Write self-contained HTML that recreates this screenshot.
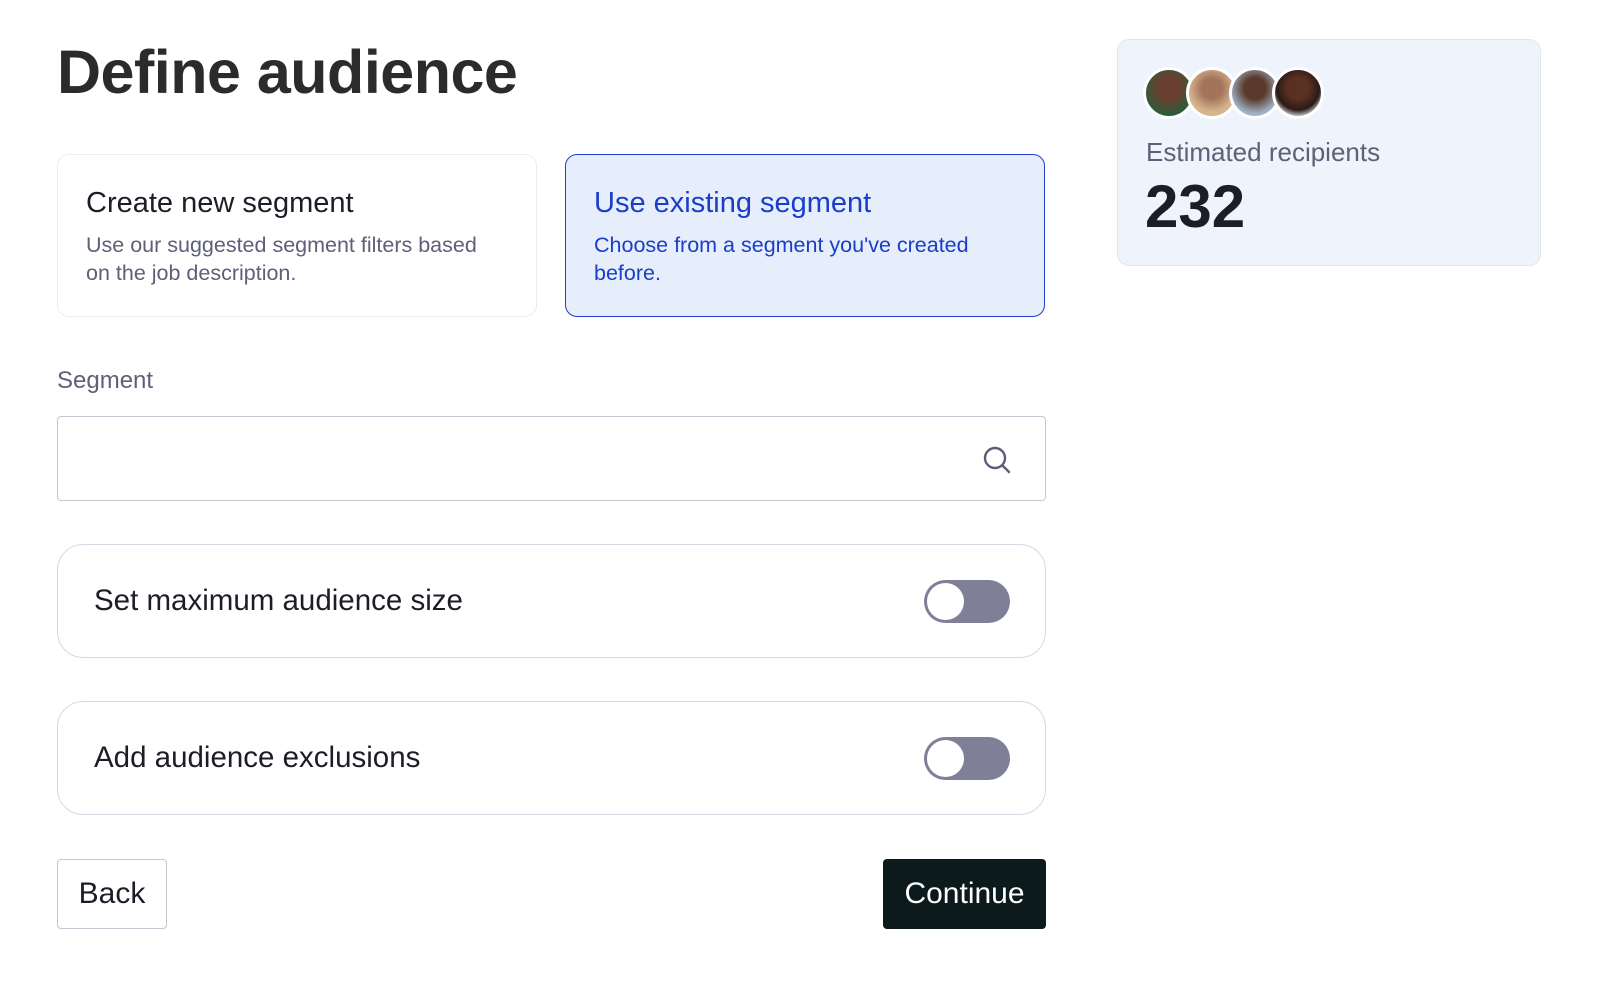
<!DOCTYPE html>
<html><head><meta charset="utf-8"><style>
*{box-sizing:border-box;margin:0;padding:0}
body{width:1598px;height:1008px;background:#fff;font-family:"Liberation Sans",sans-serif;position:relative;overflow:hidden;color:#1d1d28}
.abs{position:absolute}
h1{position:absolute;left:57px;top:37px;font-size:61px;font-weight:bold;color:#2b2b2b;letter-spacing:-0.5px}
.card{position:absolute;top:154px;width:480px;height:163px;border:1px solid #ebebf0;border-radius:12px;padding:32px 28px}
.card .t{font-size:29px}
.card .d{font-size:21.5px;line-height:28px;margin-top:11px;color:#5e5f78;max-width:410px}
.sel{background:#e6edfb;border-color:#1f3fcf;color:#1a3ec9}
.sel .d{color:#1a3ec9}
.lbl{left:57px;top:367px;font-size:24px;color:#5e5f78}
.input{left:57px;top:416px;width:989px;height:85px;border:1px solid #c6c6d2;border-radius:4px}
.tg{position:absolute;left:57px;width:989px;height:114px;border:1px solid #d8d8e4;border-radius:26px}
.tg span{position:absolute;left:36px;top:39px;font-size:29.5px;color:#1d1d28}
.sw{position:absolute;right:35px;top:35px;width:86px;height:43px;border-radius:22px;background:#7f8097}
.sw:after{content:"";position:absolute;left:3px;top:3px;width:37px;height:37px;border-radius:50%;background:#fff}
.btn{position:absolute;top:859px;height:70px;border-radius:4px;font-size:30px;display:flex;align-items:center;justify-content:center}
.panel{left:1117px;top:39px;width:424px;height:227px;background:#eff3fb;border:1px solid #e1e5ef;border-radius:12px}
.av{position:absolute;top:68px;width:52px;height:52px;border-radius:50%;border:3px solid #fff}
</style></head><body>
<h1>Define audience</h1>
<div class="card" style="left:57px"><div class="t">Create new segment</div><div class="d">Use our suggested segment filters based on the job description.</div></div>
<div class="card sel" style="left:565px"><div class="t">Use existing segment</div><div class="d">Choose from a segment you've created before.</div></div>
<div class="abs lbl">Segment</div>
<div class="abs input"><svg class="abs" style="left:923px;top:27px" width="32" height="32" viewBox="0 0 32 32" fill="none" stroke="#5b5c78" stroke-width="2.4" stroke-linecap="round"><circle cx="14" cy="14" r="10"/><path d="M21.5 21.5L28 28"/></svg></div>
<div class="tg" style="top:544px"><span>Set maximum audience size</span><div class="sw"></div></div>
<div class="tg" style="top:701px"><span>Add audience exclusions</span><div class="sw"></div></div>
<div class="btn" style="left:57px;width:110px;border:1px solid #c6c6d2;color:#1d1d28">Back</div>
<div class="btn" style="left:883px;width:163px;background:#0c1a1c;color:#fff">Continue</div>
<div class="abs panel">
<div class="av" style="left:25px;top:27px;background:radial-gradient(circle at 50% 40%,#6b4030 30%,#2f5a3a 70%);"></div>
<div class="av" style="left:68px;top:27px;background:radial-gradient(circle at 50% 40%,#a4735a 28%,#d5b58c 65%);"></div>
<div class="av" style="left:111px;top:27px;background:radial-gradient(circle at 50% 40%,#5a3a2a 30%,#9fb2c8 70%);"></div>
<div class="av" style="left:154px;top:27px;background:radial-gradient(circle at 50% 40%,#5a3020 30%,#2a1a18 60%,#ddd 80%);"></div>
<div class="abs" style="left:28px;top:97px;font-size:26px;color:#5e5f78">Estimated recipients</div>
<div class="abs" style="left:27px;top:132px;font-size:60px;font-weight:bold;color:#1d1d28">232</div>
</div>
</body></html>
